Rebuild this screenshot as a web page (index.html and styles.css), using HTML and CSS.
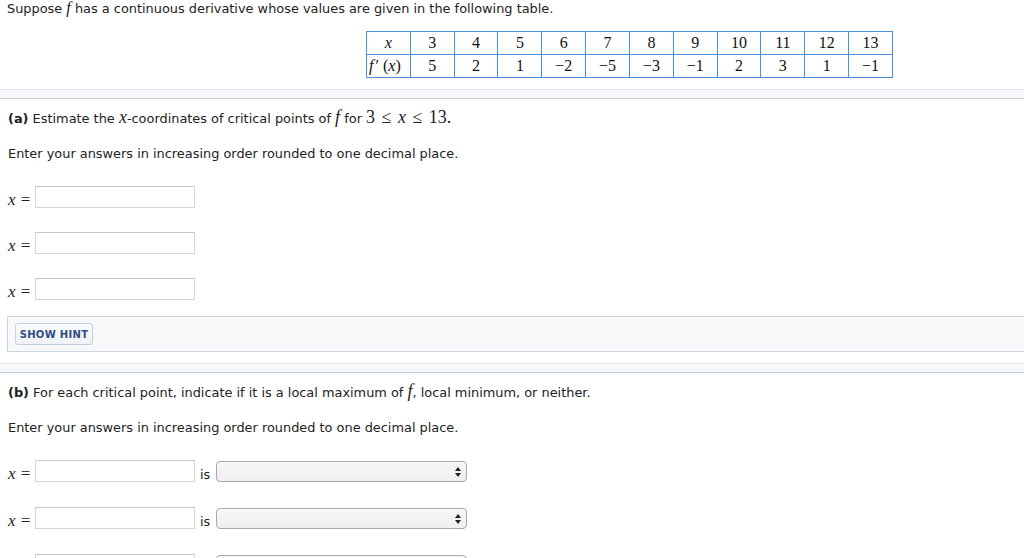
FILE: index.html
```html
<!DOCTYPE html>
<html>
<head>
<meta charset="utf-8">
<link rel="stylesheet" href="styles.css">
</head>
<body>
<p class="intro">Suppose <i class="m">f</i> has a continuous derivative whose values are given in the following table.</p>
<div class="tbl-wrap">
  <table class="data">
    <tr><td><i>x</i></td><td>3</td><td>4</td><td>5</td><td>6</td><td>7</td><td>8</td><td>9</td><td>10</td><td>11</td><td>12</td><td>13</td></tr>
    <tr><td class="hd"><i>f</i><span class="pr">′</span> (<i>x</i>)</td><td>5</td><td>2</td><td>1</td><td>−2</td><td>−5</td><td>−3</td><td>−1</td><td>2</td><td>3</td><td>1</td><td>−1</td></tr>
  </table>
</div>
<div class="sep"></div>
<section class="part">
  <p class="q"><b>(a)</b> Estimate the <i class="m">x</i>-coordinates of critical points of <i class="m">f</i> for <span class="mm">3 ≤ <i>x</i> ≤ 13.</span></p>
  <p class="note">Enter your answers in increasing order rounded to one decimal place.</p>
  <div class="answers">
    <div class="ans"><span class="lbl"><i>x</i> =</span><input class="box" type="text"></div>
    <div class="ans"><span class="lbl"><i>x</i> =</span><input class="box" type="text"></div>
    <div class="ans"><span class="lbl"><i>x</i> =</span><input class="box" type="text"></div>
  </div>
</section>
<div class="hint-panel"><button class="hint-btn">SHOW HINT</button></div>
<div class="sep sep2"></div>
<section class="part">
  <p class="q"><b>(b)</b> For each critical point, indicate if it is a local maximum of <i class="m">f</i>, local minimum, or neither.</p>
  <p class="note">Enter your answers in increasing order rounded to one decimal place.</p>
  <div class="answers answers-b">
    <div class="ans"><span class="lbl"><i>x</i> =</span><input class="box" type="text"><span class="is">is</span><div class="sel"><svg width="6" height="10" viewBox="0 0 6 10"><path d="M0 4 L3 0 L6 4 Z M0 6 L3 10 L6 6 Z" fill="#222"/></svg></div></div>
    <div class="ans"><span class="lbl"><i>x</i> =</span><input class="box" type="text"><span class="is">is</span><div class="sel"><svg width="6" height="10" viewBox="0 0 6 10"><path d="M0 4 L3 0 L6 4 Z M0 6 L3 10 L6 6 Z" fill="#222"/></svg></div></div>
    <div class="ans ans-last"><input class="box" type="text"><span class="is"></span><div class="sel"></div></div>
  </div>
</section>
</body>
</html>
```
FILE: styles.css
```css
html, body {
  margin: 0;
  padding: 0;
  background: #fff;
  overflow: hidden;
}
body {
  font-family: "DejaVu Sans", Verdana, sans-serif;
  font-size: 12.9px;
  color: #222;
  height: 558px;
}
p { margin: 0; }
.m, .mm, .lbl, .data {
  font-family: "Liberation Serif", "Times New Roman", serif;
}
.m { font-size: 18px; line-height: 12px; }
.mm { font-size: 18px; line-height: 12px; word-spacing: 2px; }
.intro {
  padding: 2px 0 0 7px;
  line-height: 13px;
}
.intro .m { font-size: 16px; }
.tbl-wrap {
  margin-top: 16px;
  padding-left: 366px;
}
.data {
  border-collapse: collapse;
  table-layout: fixed;
  width: 527px;
  font-size: 16px;
  color: #111;
}
.data td {
  border: 1px solid #4b90df;
  height: 22px;
  padding: 0;
  text-align: center;
  line-height: 20px;
  white-space: nowrap;
}
.data td.hd { text-align: left; padding-left: 2px; }
.pr { margin-left: 2px; }
.sep {
  margin-top: 11px;
  height: 8px;
  background: #f6f8fb;
  border-top: 1px solid #e0e4ea;
  border-bottom: 1px solid #c8ced8;
}
.part {
  padding-left: 8px;
}
.q {
  margin-top: 12px;
  line-height: 16px;
}
.note {
  margin-top: 19px;
  line-height: 16px;
}
.answers {
  margin-top: 24px;
  display: flex;
  flex-direction: column;
  gap: 24px;
}
.answers-b { gap: 25px; }
.ans {
  display: flex;
  align-items: center;
  height: 22px;
}
.ans-last { padding-left: 27px; }
.lbl {
  width: 27px;
  font-size: 17px;
  padding-top: 6px;
  white-space: nowrap;
  word-spacing: 1px;
}
.box {
  box-sizing: border-box;
  width: 160px;
  height: 22px;
  margin: 0;
  padding: 0;
  border: 1px solid #d6d6d6;
  border-top-color: #c8c8c8;
  background: #fff;
  outline: none;
}
.is {
  margin-left: 5px;
  width: 16px;
  padding-top: 6px;
}
.sel {
  box-sizing: border-box;
  width: 251px;
  height: 21px;
  margin-top: 1px;
  border: 1px solid #a8a8a8;
  border-radius: 4px;
  background: linear-gradient(#f8f8f8, #efefef);
  display: flex;
  align-items: center;
  justify-content: flex-end;
  padding-right: 5px;
}
.hint-panel {
  margin-top: 16px;
  margin-left: 7px;
  border: 1px solid #cfd5df;
  border-right: none;
  background: #f6f8fa;
  padding: 6px 0 0 7px;
  box-sizing: border-box;
  height: 36px;
}
.hint-btn {
  display: block;
  width: 78px;
  height: 22px;
  margin: 0;
  padding: 0;
  border: 1px solid #c6cfdc;
  border-radius: 3px;
  background: linear-gradient(#fbfcfd, #eef2f6);
  color: #2c4c82;
  font-family: "DejaVu Sans", Verdana, sans-serif;
  font-weight: bold;
  font-size: 10px;
  letter-spacing: 0.3px;
}
.sep2 { margin-top: 11px; }
```
